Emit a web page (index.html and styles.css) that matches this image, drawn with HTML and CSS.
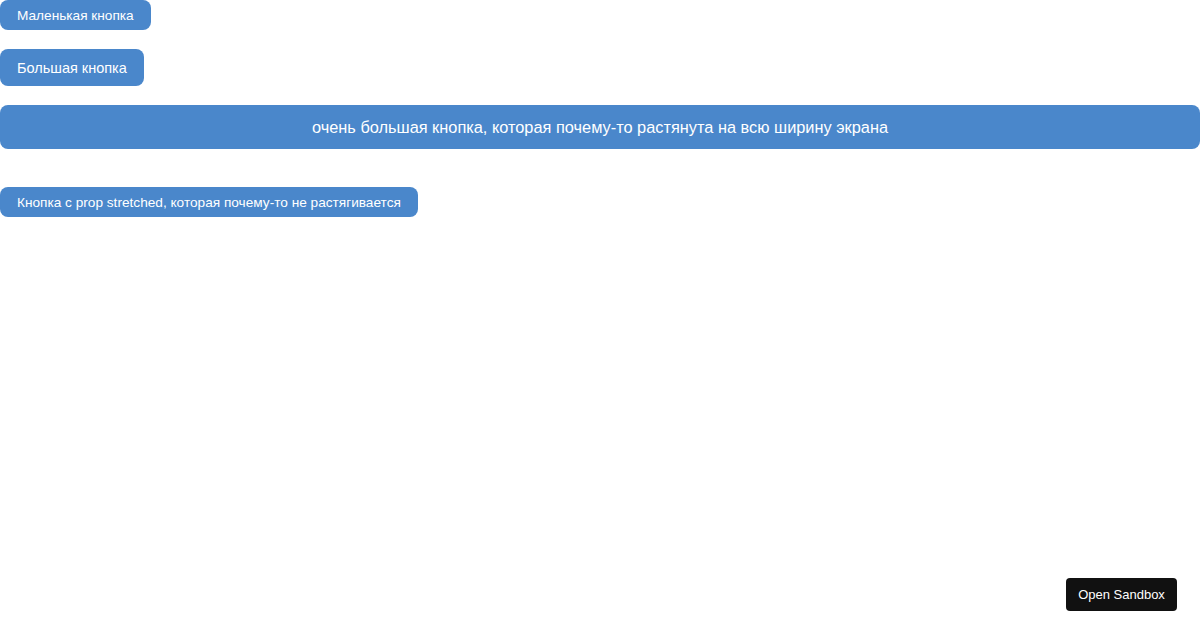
FILE: index.html
```html
<!DOCTYPE html>
<html lang="ru">
<head>
<meta charset="utf-8">
<link rel="stylesheet" href="styles.css">
</head>
<body>
<div class="page">
  <div class="row"><button class="btn btn-s">Маленькая кнопка</button></div>
  <div class="row"><button class="btn btn-m">Большая кнопка</button></div>
  <div class="row"><button class="btn btn-l">очень большая кнопка, которая почему-то растянута на всю ширину экрана</button></div>
  <div class="row row-gap"><button class="btn btn-s">Кнопка с prop stretched, которая почему-то не растягивается</button></div>
</div>
<a class="sandbox">Open Sandbox</a>
</body>
</html>
```
FILE: styles.css
```css
html, body { margin: 0; padding: 0; background: #fff; }
body { font-family: "Liberation Sans", Arial, sans-serif; width: 1200px; height: 630px; position: relative; overflow: hidden; }
.page { display: flex; flex-direction: column; gap: 19px; align-items: flex-start; }
.row { display: flex; width: 100%; }
.row-gap { margin-top: 19px; }
.btn { font-family: inherit; border: none; background: #4a87cb; color: #fff; cursor: pointer; margin: 0; display: flex; align-items: center; justify-content: center; }
.btn-s { height: 30px; padding: 0 17px; font-size: 13.65px; border-radius: 8px; }
.btn-m { height: 37px; padding: 0 17px; font-size: 14.5px; border-radius: 8px; }
.btn-l { height: 44px; width: 100%; padding: 0 17px; font-size: 16.35px; border-radius: 8px; }
.sandbox { position: absolute; left: 1066px; top: 578px; width: 111px; height: 33px; background: #111; color: #fff; border-radius: 4px; font-size: 13px; display: flex; align-items: center; justify-content: center; font-family: "Liberation Sans", Arial, sans-serif; }
```
